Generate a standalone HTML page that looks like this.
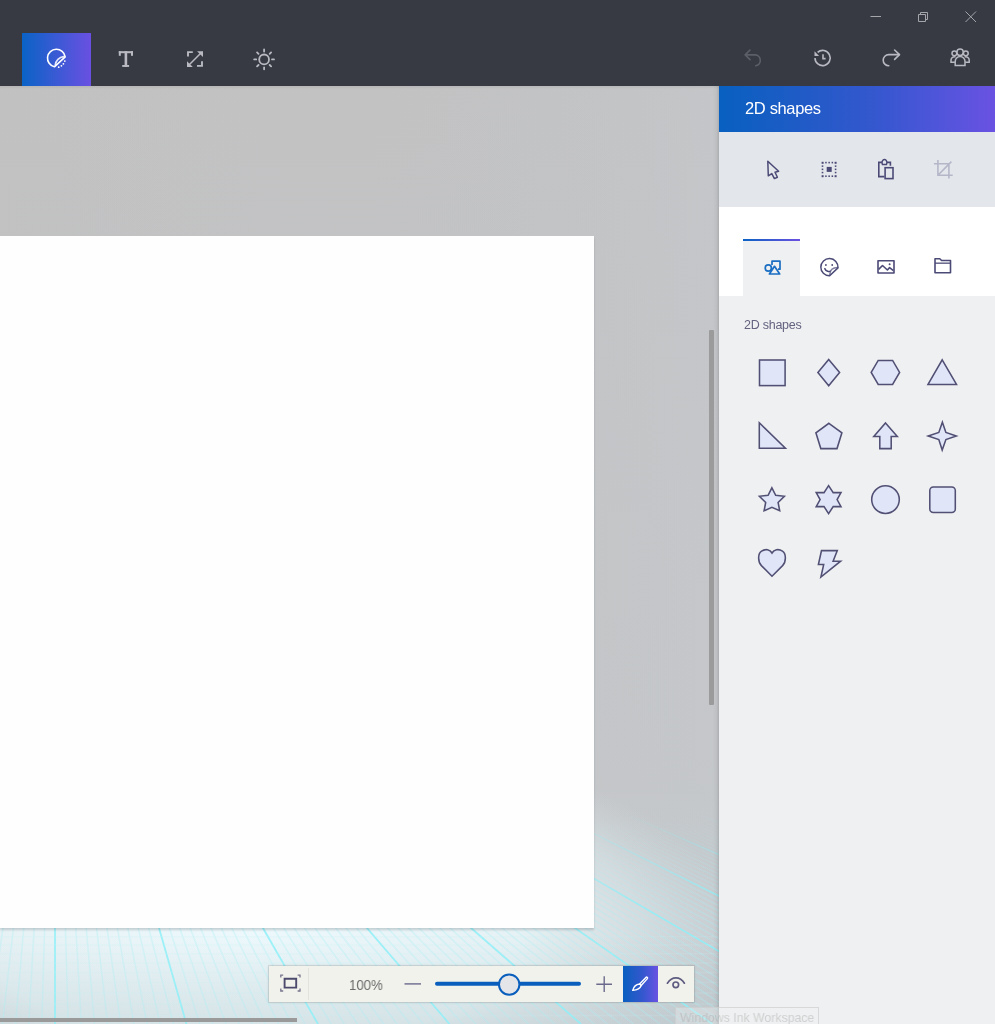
<!DOCTYPE html>
<html><head><meta charset="utf-8">
<style>
*{margin:0;padding:0;box-sizing:border-box}
html,body{width:995px;height:1024px;overflow:hidden;font-family:"Liberation Sans",sans-serif;background:#c3c4c6;-webkit-font-smoothing:antialiased}
.gs{will-change:transform}
.a{position:absolute}
svg{position:absolute;overflow:visible}
.mj{stroke:#8ef0f8;stroke-width:1.8;stroke-opacity:0.85}
.mn{stroke:#a8eef6;stroke-width:1.5;stroke-opacity:0.32}
.hz{stroke:#c4f2f7;stroke-width:1.5;stroke-opacity:0.15}
</style></head><body>
<!-- stage -->
<svg class="a" style="left:0;top:0" width="719" height="1024" viewBox="0 0 719 1024">
  <defs>
    <linearGradient id="bg" x1="0" y1="86" x2="0" y2="1024" gradientUnits="userSpaceOnUse">
      <stop offset="0" stop-color="#c2c2c3"/>
      <stop offset="0.74" stop-color="#c4c6c8"/>
      <stop offset="1" stop-color="#cdd7db"/>
    </linearGradient>
    <radialGradient id="glow" cx="250" cy="935" r="490" gradientUnits="userSpaceOnUse" gradientTransform="translate(250 935) scale(1 0.42) translate(-250 -935)">
      <stop offset="0" stop-color="#ecf8fb" stop-opacity="1"/>
      <stop offset="0.55" stop-color="#e7f3f6" stop-opacity="0.95"/>
      <stop offset="0.8" stop-color="#e0e9ec" stop-opacity="0.55"/>
      <stop offset="1" stop-color="#d8e1e5" stop-opacity="0"/>
    </radialGradient>
    <linearGradient id="fdark" x1="0" y1="935" x2="0" y2="1024" gradientUnits="userSpaceOnUse">
      <stop offset="0" stop-color="#aabbc0" stop-opacity="0"/>
      <stop offset="1" stop-color="#aabbc0" stop-opacity="0.28"/>
    </linearGradient>
    <linearGradient id="bgh" x1="0" y1="0" x2="719" y2="0" gradientUnits="userSpaceOnUse">
      <stop offset="0" stop-color="#c0c0c0" stop-opacity="0.5"/>
      <stop offset="0.5" stop-color="#c2c3c4" stop-opacity="0"/>
      <stop offset="1" stop-color="#c5c8cc" stop-opacity="0.6"/>
    </linearGradient>
    <linearGradient id="tsh" x1="0" y1="86" x2="0" y2="89" gradientUnits="userSpaceOnUse">
      <stop offset="0" stop-color="#000" stop-opacity="0.06"/>
      <stop offset="1" stop-color="#000" stop-opacity="0"/>
    </linearGradient>
    <linearGradient id="fm" x1="0" y1="812" x2="0" y2="910" gradientUnits="userSpaceOnUse">
      <stop offset="0" stop-color="#fff" stop-opacity="0"/>
      <stop offset="1" stop-color="#fff" stop-opacity="1"/>
    </linearGradient>
    <mask id="m1" maskUnits="userSpaceOnUse" x="0" y="0" width="719" height="1024"><rect x="0" y="0" width="719" height="1024" fill="url(#fm)"/></mask>
  </defs>
  <rect x="0" y="86" width="719" height="938" fill="url(#bg)"/>
  <rect x="0" y="86" width="719" height="938" fill="url(#bgh)"/>
  <rect x="0" y="86" width="719" height="3" fill="url(#tsh)"/>
  <rect x="0" y="760" width="719" height="264" fill="url(#glow)"/>
  <rect x="0" y="935" width="719" height="89" fill="url(#fdark)"/>
  <g mask="url(#m1)">
<line x1="-6.5" y1="760" x2="-89.7" y2="1024" class="mn"/>
<line x1="-0.9" y1="760" x2="-76.5" y2="1024" class="mj"/>
<line x1="4.7" y1="760" x2="-63.4" y2="1024" class="mn"/>
<line x1="10.3" y1="760" x2="-50.2" y2="1024" class="mn"/>
<line x1="15.9" y1="760" x2="-37.1" y2="1024" class="mn"/>
<line x1="21.5" y1="760" x2="-23.9" y2="1024" class="mn"/>
<line x1="27.1" y1="760" x2="-10.8" y2="1024" class="mn"/>
<line x1="32.7" y1="760" x2="2.4" y2="1024" class="mn"/>
<line x1="38.2" y1="760" x2="15.5" y2="1024" class="mn"/>
<line x1="43.8" y1="760" x2="28.7" y2="1024" class="mn"/>
<line x1="49.4" y1="760" x2="41.8" y2="1024" class="mn"/>
<line x1="55.0" y1="760" x2="55.0" y2="1024" class="mj"/>
<line x1="60.6" y1="760" x2="68.2" y2="1024" class="mn"/>
<line x1="66.2" y1="760" x2="81.3" y2="1024" class="mn"/>
<line x1="71.8" y1="760" x2="94.5" y2="1024" class="mn"/>
<line x1="77.3" y1="760" x2="107.6" y2="1024" class="mn"/>
<line x1="82.9" y1="760" x2="120.8" y2="1024" class="mn"/>
<line x1="88.5" y1="760" x2="133.9" y2="1024" class="mn"/>
<line x1="94.1" y1="760" x2="147.1" y2="1024" class="mn"/>
<line x1="99.7" y1="760" x2="160.2" y2="1024" class="mn"/>
<line x1="105.3" y1="760" x2="173.4" y2="1024" class="mn"/>
<line x1="110.9" y1="760" x2="186.5" y2="1024" class="mj"/>
<line x1="116.5" y1="760" x2="199.7" y2="1024" class="mn"/>
<line x1="122.0" y1="760" x2="212.8" y2="1024" class="mn"/>
<line x1="127.6" y1="760" x2="226.0" y2="1024" class="mn"/>
<line x1="133.2" y1="760" x2="239.1" y2="1024" class="mn"/>
<line x1="138.8" y1="760" x2="252.3" y2="1024" class="mn"/>
<line x1="144.4" y1="760" x2="265.4" y2="1024" class="mn"/>
<line x1="150.0" y1="760" x2="278.6" y2="1024" class="mn"/>
<line x1="155.6" y1="760" x2="291.7" y2="1024" class="mn"/>
<line x1="161.1" y1="760" x2="304.9" y2="1024" class="mn"/>
<line x1="166.7" y1="760" x2="318.0" y2="1024" class="mj"/>
<line x1="172.3" y1="760" x2="331.2" y2="1024" class="mn"/>
<line x1="177.9" y1="760" x2="344.3" y2="1024" class="mn"/>
<line x1="183.5" y1="760" x2="357.5" y2="1024" class="mn"/>
<line x1="189.1" y1="760" x2="370.6" y2="1024" class="mn"/>
<line x1="194.7" y1="760" x2="383.8" y2="1024" class="mn"/>
<line x1="200.3" y1="760" x2="396.9" y2="1024" class="mn"/>
<line x1="205.8" y1="760" x2="410.1" y2="1024" class="mn"/>
<line x1="211.4" y1="760" x2="423.2" y2="1024" class="mn"/>
<line x1="217.0" y1="760" x2="436.4" y2="1024" class="mn"/>
<line x1="222.6" y1="760" x2="449.5" y2="1024" class="mj"/>
<line x1="228.2" y1="760" x2="462.7" y2="1024" class="mn"/>
<line x1="233.8" y1="760" x2="475.8" y2="1024" class="mn"/>
<line x1="239.4" y1="760" x2="489.0" y2="1024" class="mn"/>
<line x1="244.9" y1="760" x2="502.1" y2="1024" class="mn"/>
<line x1="250.5" y1="760" x2="515.3" y2="1024" class="mn"/>
<line x1="256.1" y1="760" x2="528.4" y2="1024" class="mn"/>
<line x1="261.7" y1="760" x2="541.6" y2="1024" class="mn"/>
<line x1="267.3" y1="760" x2="554.7" y2="1024" class="mn"/>
<line x1="272.9" y1="760" x2="567.9" y2="1024" class="mn"/>
<line x1="278.5" y1="760" x2="581.0" y2="1024" class="mj"/>
<line x1="284.1" y1="760" x2="594.2" y2="1024" class="mn"/>
<line x1="289.6" y1="760" x2="607.3" y2="1024" class="mn"/>
<line x1="295.2" y1="760" x2="620.5" y2="1024" class="mn"/>
<line x1="300.8" y1="760" x2="633.6" y2="1024" class="mn"/>
<line x1="306.4" y1="760" x2="646.8" y2="1024" class="mn"/>
<line x1="312.0" y1="760" x2="659.9" y2="1024" class="mn"/>
<line x1="317.6" y1="760" x2="673.1" y2="1024" class="mn"/>
<line x1="323.2" y1="760" x2="686.2" y2="1024" class="mn"/>
<line x1="328.8" y1="760" x2="699.4" y2="1024" class="mn"/>
<line x1="334.3" y1="760" x2="712.5" y2="1024" class="mj"/>
<line x1="339.9" y1="760" x2="725.7" y2="1024" class="mn"/>
<line x1="345.5" y1="760" x2="738.8" y2="1024" class="mn"/>
<line x1="351.1" y1="760" x2="752.0" y2="1024" class="mn"/>
<line x1="356.7" y1="760" x2="765.1" y2="1024" class="mn"/>
<line x1="362.3" y1="760" x2="778.3" y2="1024" class="mn"/>
<line x1="367.9" y1="760" x2="791.4" y2="1024" class="mn"/>
<line x1="373.4" y1="760" x2="804.6" y2="1024" class="mn"/>
<line x1="379.0" y1="760" x2="817.7" y2="1024" class="mn"/>
<line x1="384.6" y1="760" x2="830.9" y2="1024" class="mn"/>
<line x1="390.2" y1="760" x2="844.0" y2="1024" class="mj"/>
<line x1="395.8" y1="760" x2="857.2" y2="1024" class="mn"/>
<line x1="401.4" y1="760" x2="870.3" y2="1024" class="mn"/>
<line x1="407.0" y1="760" x2="883.5" y2="1024" class="mn"/>
<line x1="412.6" y1="760" x2="896.6" y2="1024" class="mn"/>
<line x1="418.1" y1="760" x2="909.8" y2="1024" class="mn"/>
<line x1="423.7" y1="760" x2="922.9" y2="1024" class="mn"/>
<line x1="429.3" y1="760" x2="936.1" y2="1024" class="mn"/>
<line x1="434.9" y1="760" x2="949.2" y2="1024" class="mn"/>
<line x1="440.5" y1="760" x2="962.4" y2="1024" class="mn"/>
<line x1="446.1" y1="760" x2="975.5" y2="1024" class="mj"/>
<line x1="451.7" y1="760" x2="988.7" y2="1024" class="mn"/>
<line x1="457.2" y1="760" x2="1001.8" y2="1024" class="mn"/>
<line x1="462.8" y1="760" x2="1015.0" y2="1024" class="mn"/>
<line x1="468.4" y1="760" x2="1028.1" y2="1024" class="mn"/>
<line x1="474.0" y1="760" x2="1041.3" y2="1024" class="mn"/>
<line x1="479.6" y1="760" x2="1054.4" y2="1024" class="mn"/>
<line x1="485.2" y1="760" x2="1067.6" y2="1024" class="mn"/>
<line x1="490.8" y1="760" x2="1080.7" y2="1024" class="mn"/>
<line x1="496.4" y1="760" x2="1093.9" y2="1024" class="mn"/>
<line x1="501.9" y1="760" x2="1107.0" y2="1024" class="mj"/>
<line x1="507.5" y1="760" x2="1120.2" y2="1024" class="mn"/>
<line x1="513.1" y1="760" x2="1133.3" y2="1024" class="mn"/>
<line x1="518.7" y1="760" x2="1146.5" y2="1024" class="mn"/>
<line x1="524.3" y1="760" x2="1159.6" y2="1024" class="mn"/>
<line x1="529.9" y1="760" x2="1172.8" y2="1024" class="mn"/>
<line x1="535.5" y1="760" x2="1185.9" y2="1024" class="mn"/>
<line x1="541.0" y1="760" x2="1199.1" y2="1024" class="mn"/>
<line x1="546.6" y1="760" x2="1212.2" y2="1024" class="mn"/>
<line x1="552.2" y1="760" x2="1225.4" y2="1024" class="mn"/>
<line x1="557.8" y1="760" x2="1238.5" y2="1024" class="mj"/>
<line x1="563.4" y1="760" x2="1251.7" y2="1024" class="mn"/>
<line x1="569.0" y1="760" x2="1264.8" y2="1024" class="mn"/>
<line x1="574.6" y1="760" x2="1278.0" y2="1024" class="mn"/>
<line x1="580.2" y1="760" x2="1291.1" y2="1024" class="mn"/>
<line x1="585.7" y1="760" x2="1304.3" y2="1024" class="mn"/>
<line x1="591.3" y1="760" x2="1317.4" y2="1024" class="mn"/>
<line x1="596.9" y1="760" x2="1330.6" y2="1024" class="mn"/>
<line x1="602.5" y1="760" x2="1343.7" y2="1024" class="mn"/>
<line x1="608.1" y1="760" x2="1356.9" y2="1024" class="mn"/>
<line x1="613.7" y1="760" x2="1370.0" y2="1024" class="mj"/>
<line x1="619.3" y1="760" x2="1383.2" y2="1024" class="mn"/>
<line x1="624.8" y1="760" x2="1396.3" y2="1024" class="mn"/>
<line x1="630.4" y1="760" x2="1409.5" y2="1024" class="mn"/>
<line x1="636.0" y1="760" x2="1422.6" y2="1024" class="mn"/>
<line x1="641.6" y1="760" x2="1435.8" y2="1024" class="mn"/>
<line x1="647.2" y1="760" x2="1448.9" y2="1024" class="mn"/>
<line x1="652.8" y1="760" x2="1462.1" y2="1024" class="mn"/>
<line x1="658.4" y1="760" x2="1475.2" y2="1024" class="mn"/>
<line x1="664.0" y1="760" x2="1488.4" y2="1024" class="mn"/>
<line x1="669.5" y1="760" x2="1501.5" y2="1024" class="mj"/>
<line x1="675.1" y1="760" x2="1514.7" y2="1024" class="mn"/>
<line x1="680.7" y1="760" x2="1527.8" y2="1024" class="mn"/>
<line x1="686.3" y1="760" x2="1541.0" y2="1024" class="mn"/>
<line x1="691.9" y1="760" x2="1554.1" y2="1024" class="mn"/>
<line x1="697.5" y1="760" x2="1567.3" y2="1024" class="mn"/>
<line x1="703.1" y1="760" x2="1580.4" y2="1024" class="mn"/>
<line x1="708.6" y1="760" x2="1593.6" y2="1024" class="mn"/>
<line x1="714.2" y1="760" x2="1606.7" y2="1024" class="mn"/>
<line x1="719.8" y1="760" x2="1619.9" y2="1024" class="mn"/>
<line x1="725.4" y1="760" x2="1633.0" y2="1024" class="mj"/>
<line x1="0" y1="936.8" x2="719" y2="936.8" class="hz"/>
<line x1="0" y1="945.1" x2="719" y2="945.1" class="hz"/>
<line x1="0" y1="953.8" x2="719" y2="953.8" class="hz"/>
<line x1="0" y1="962.9" x2="719" y2="962.9" class="hz"/>
<line x1="0" y1="972.4" x2="719" y2="972.4" class="hz"/>
<line x1="0" y1="982.4" x2="719" y2="982.4" class="hz"/>
<line x1="0" y1="992.9" x2="719" y2="992.9" class="hz"/>
<line x1="0" y1="1003.9" x2="719" y2="1003.9" class="hz"/>
<line x1="0" y1="1015.5" x2="719" y2="1015.5" class="hz"/>

  </g>
</svg>
<!-- paper -->
<div class="a" style="left:0;top:236px;width:594px;height:692px;background:#fefefe;box-shadow:0 1.5px 2px rgba(40,55,65,0.2)"></div>
<!-- v scrollbar -->
<div class="a" style="left:709px;top:330px;width:4.8px;height:375px;background:#9b9b9c;border-radius:1px"></div>
<!-- h scrollbar -->
<div class="a" style="left:0;top:1017.5px;width:297px;height:4.5px;background:#9a9a9b"></div>

<!-- top bar -->
<div class="a" style="left:0;top:0;width:995px;height:86px;background:#373943"></div>
<div class="a" style="left:22px;top:33px;width:69px;height:53px;background:linear-gradient(90deg,#0a63c6,#6a50e2)"></div>
<svg class="a" style="left:0;top:0" width="995" height="86" viewBox="0 0 995 86" fill="none">
  <!-- brush -->
  <g transform="translate(0.2 0.6)">
  <g stroke="#fff" stroke-width="1.6" stroke-linecap="round" stroke-linejoin="round">
    <path d="M65,56.2 A8.9,8.9 0 1 0 54.2,66.2 Z"/>
    <path d="M55,64.6 C55.5,60 59,56.5 63.5,56" stroke-opacity="0.85"/>
  </g>
  <g fill="#fff">
    <circle cx="64.6" cy="60.5" r="0.9"/><circle cx="63.2" cy="63.2" r="0.9"/><circle cx="61.2" cy="65.2" r="0.9"/><circle cx="58.5" cy="66.6" r="0.9"/>
  </g>
  </g>
  <!-- T -->
  <g fill="#b9bac1">
    <rect x="118.8" y="51.2" width="14.2" height="2"/>
    <rect x="118.8" y="51.2" width="2" height="4.6"/>
    <rect x="131" y="51.2" width="2" height="4.6"/>
    <rect x="124.6" y="51.2" width="2.6" height="15.7"/>
    <rect x="122.2" y="65" width="6.9" height="1.9"/>
  </g>
  <!-- resize -->
  <g stroke="#b9bac1" stroke-width="1.9" fill="none">
    <path d="M188,56.6 V52.1 H192.8"/>
    <path d="M202,61.3 V65.9 H197"/>
    <path d="M189.2,64.8 L201,53" stroke-width="1.5"/>
  </g>
  <g fill="#b9bac1">
    <path d="M197,51.2 H203 V57 Z"/>
    <path d="M187,61.3 V67 H192.8 Z"/>
  </g>
  <!-- sun -->
  <g stroke="#b9bac1" stroke-width="1.8" fill="none" stroke-linecap="round">
    <circle cx="264.1" cy="59.4" r="4.9"/>
    <path d="M264.1,49.5 V51.5 M264.1,67.3 V69.3 M254.2,59.4 H256.2 M272,59.4 H274 M257.1,52.4 L258.5,53.8 M269.7,65 L271.1,66.4 M271.1,52.4 L269.7,53.8 M258.5,65 L257.1,66.4"/>
  </g>
  <!-- window controls -->
  <g stroke="#a5a6ab" stroke-width="1" fill="none">
    <path d="M870.5,16.5 H881"/>
    <path d="M918.5,14.5 H925.5 V21.5 H918.5 Z M920.5,14.5 V12.5 H927.5 V19.5 H925.5"/>
    <path d="M965.5,11.5 L976,22 M976,11.5 L965.5,22"/>
  </g>
  <!-- undo (disabled) -->
  <g stroke="#5c5f68" stroke-width="1.6" fill="none" stroke-linecap="round" stroke-linejoin="round">
    <path d="M750,50 L745.2,54.9 L750,59.6"/>
    <path d="M745.5,54.9 H754.5 A5.5,5.5 0 0 1 755.8,65.8"/>
  </g>
  <!-- history -->
  <g stroke="#b9bac1" stroke-width="1.6" fill="none">
    <path d="M815,58 A7.6,7.6 0 1 0 817.6,52.3"/>
    <path d="M823,54.2 V58.6 H825.6"/>
  </g>
  <path d="M814.5,51.3 V55.9 H819.1 Z" fill="#b9bac1"/>
  <!-- redo -->
  <g stroke="#b9bac1" stroke-width="1.6" fill="none" stroke-linecap="round" stroke-linejoin="round">
    <path d="M894.6,50 L899.5,54.6 L894.6,59.4"/>
    <path d="M899.2,54.6 H888.8 A5.6,5.6 0 0 0 888.8,65.8"/>
  </g>
  <!-- people -->
  <g stroke="#b9bac1" stroke-width="1.5" fill="none">
    <circle cx="960.1" cy="52.2" r="3.2"/>
    <path d="M955.2,65.4 V61.5 A4.9,4.9 0 0 1 965,61.5 V65.4 Z"/>
    <circle cx="954.4" cy="53.3" r="2.4"/>
    <circle cx="965.8" cy="53.3" r="2.4"/>
    <path d="M954.9,62.3 H951 V60 A3.4,3.4 0 0 1 955.5,57"/>
    <path d="M965.3,62.3 H969.2 V60 A3.4,3.4 0 0 0 964.7,57"/>
  </g>
</svg>

<!-- panel -->
<div class="a" style="left:713px;top:86px;width:6px;height:938px;background:linear-gradient(90deg,rgba(0,0,0,0),rgba(0,0,0,0.04) 60%,rgba(0,0,0,0.13))"></div>
<div class="a" style="left:719px;top:86px;width:276px;height:938px;background:#eff0f2"></div>
<div class="a" style="left:719px;top:86px;width:276px;height:46px;background:linear-gradient(90deg,#0860c0,#1f5bc6 29%,#3657cf 58%,#5055da 80%,#6a52e2)"></div>
<div class="a" style="left:744.5px;top:98px;font-size:16.5px;line-height:20px;color:#fff;letter-spacing:-0.35px;will-change:transform">2D shapes</div>
<div class="a" style="left:719px;top:132px;width:276px;height:75px;background:#e3e6ea"></div>
<div class="a" style="left:719px;top:207px;width:276px;height:89px;background:#ffffff"></div>
<div class="a" style="left:743px;top:241px;width:57px;height:55px;background:#eff0f2"></div>
<div class="a" style="left:743.3px;top:238.7px;width:57px;height:2.5px;background:linear-gradient(90deg,#0b62c5,#6b50e1)"></div>
<div class="a" style="left:743.6px;top:316.5px;font-size:12.5px;line-height:16px;color:#63627f;letter-spacing:-0.25px;will-change:transform">2D shapes</div>

<svg class="a" style="left:0;top:0" width="995" height="1024" viewBox="0 0 995 1024" fill="none">
  <!-- tools -->
  <g stroke="#4b4a77" stroke-width="1.5" stroke-linejoin="round">
    <path d="M767.8,161.2 L778.6,171.2 L775,172.3 L777.4,177.3 L774.4,178.6 L771.8,173.6 L768.3,175.8 Z"/>
  </g>
  <g fill="#4b4a77">
    <rect x="821.6" y="161.8" width="2" height="2"/><rect x="825.2" y="161.8" width="1.5" height="1.6"/><rect x="828.4" y="161.8" width="1.5" height="1.6"/><rect x="831.6" y="161.8" width="1.5" height="1.6"/><rect x="834.6" y="161.8" width="2" height="2"/>
    <rect x="821.6" y="175.2" width="2" height="2"/><rect x="825.2" y="175.4" width="1.5" height="1.6"/><rect x="828.4" y="175.4" width="1.5" height="1.6"/><rect x="831.6" y="175.4" width="1.5" height="1.6"/><rect x="834.6" y="175.2" width="2" height="2"/>
    <rect x="821.7" y="165.4" width="1.6" height="1.5"/><rect x="821.7" y="168.6" width="1.6" height="1.5"/><rect x="821.7" y="171.8" width="1.6" height="1.5"/>
    <rect x="834.8" y="165.4" width="1.6" height="1.5"/><rect x="834.8" y="168.6" width="1.6" height="1.5"/><rect x="834.8" y="171.8" width="1.6" height="1.5"/>
    <rect x="826.7" y="166.9" width="5" height="5"/>
  </g>
  <g stroke="#4b4a77" stroke-width="1.6">
    <path d="M884.4,176.6 H878.8 V162.4 H882 M886.9,162.4 H890.4 V165.8"/>
    <path d="M882,162.4 C882.6,158.5 886.4,158.5 886.9,162.4 L886.5,164.5 H882.4 Z" stroke-width="1.4"/>
    <rect x="885.1" y="167.7" width="7.9" height="10.9"/>
  </g>
  <g stroke="#b5b7c9" stroke-width="1.6">
    <path d="M933.9,163.7 H948.9 V178.4 M937.9,160.1 V175.2 H952.7 M938.9,174.3 L951.4,161.6"/>
  </g>
  <!-- tabs -->
  <g stroke="#1a6ec3" stroke-width="1.7" stroke-linejoin="round">
    <path d="M772,265 V261.2 H780 V269.2 H778"/>
    <circle cx="768.3" cy="268" r="3.1"/>
    <path d="M774.5,266.3 L779.7,274 H769.4 Z"/>
  </g>
  <g stroke="#4b4a77" stroke-width="1.5" stroke-linecap="round">
    <path d="M838,267.8 A8.6,8.6 0 1 0 829.6,275.8 Z"/>
    <path d="M829.8,274.6 C830,270 832.5,267.6 837.6,267.6" stroke-opacity="0.7"/>
    <path d="M824.8,268.6 C826,271.6 829.5,272 830,271.2"/>
  </g>
  <g fill="#4b4a77"><circle cx="825.9" cy="265" r="0.9"/><circle cx="832.2" cy="265" r="0.9"/></g>
  <g stroke="#4b4a77" stroke-width="1.6" stroke-linejoin="round">
    <rect x="878" y="260.8" width="16" height="12.2"/>
    <path d="M878.6,269.4 L882.5,265.5 L887.4,270 L889.6,267.6 L893.4,270.6"/>
  </g>
  <circle cx="889.6" cy="264.2" r="1" fill="#4b4a77"/>
  <g stroke="#4b4a77" stroke-width="1.6" stroke-linejoin="round">
    <path d="M935,272.7 V258.7 H939.8 L941.6,260.5 H950.5 V272.7 Z"/>
    <path d="M935,263.2 H950.5" stroke-opacity="0.8"/>
  </g>
  <!-- shapes -->
  <g stroke="#514f74" stroke-width="1.55" fill="#e0e6f8" stroke-linejoin="miter">
    <rect x="759.5" y="360" width="25.6" height="25.6"/>
    <path d="M828.7,359.5 L839.6,372.6 L828.7,385.7 L817.9,372.6 Z"/>
    <path d="M871.2,372.4 L878.2,360.4 H892.6 L899.6,372.4 L892.6,384.4 H878.2 Z"/>
    <path d="M942.2,359.8 L956.5,384.4 H928 Z"/>
    <path d="M759.3,422.8 L785.4,448.2 H759.3 Z"/>
    <path d="M828.9,423.3 L841.9,432.8 L837,448.6 H820.8 L815.9,432.8 Z"/>
    <path d="M885.5,422.9 L897.3,436.4 H891.2 V448.6 H879.8 V436.4 H873.8 Z"/>
    <path d="M942.4,422.2 L945.9,432.5 L956.3,436.1 L945.9,439.5 L942.2,450 L938.8,439.5 L928.2,435.9 L938.8,432.5 Z"/>
    <path d="M771.9,487.8 L775.7,495.3 L784.4,496.3 L778.1,502.5 L779.7,510.8 L771.9,507.4 L764.1,510.8 L765.7,502.5 L759.4,496.3 L768.1,495.3 Z"/>
    <path d="M828.6,485.6 L833.2,492.6 L841,492.6 L837.1,499.6 L841,506.6 L833.2,506.6 L828.6,513.6 L824,506.6 L816.2,506.6 L820.1,499.6 L816.2,492.6 L824,492.6 Z"/>
    <circle cx="885.5" cy="499.6" r="13.8"/>
    <rect x="929.8" y="487" width="25.5" height="25.5" rx="3.5"/>
    <path d="M772,576.2 L761.4,565.6 C757.6,561.8 757.8,553.5 761.5,551.2 C765.5,548.5 770,549.5 772,553 C774,549.5 778.5,548.5 782.5,551.2 C786.2,553.5 786.4,561.8 782.6,565.6 Z"/>
    <path d="M821.5,550.6 H837.3 L833.1,561.2 H840.6 L820.9,577 L823.7,564.5 H818.4 Z"/>
  </g>
</svg>

<!-- zoom bar -->
<div class="a" style="left:269px;top:966px;width:425px;height:36px;background:#f2f2ed;box-shadow:0 0 0 1px rgba(120,125,130,0.18),0 0 3px rgba(0,0,0,0.14)"></div>
<div class="a" style="left:308px;top:968px;width:1px;height:32px;background:#e2e2de"></div>
<div class="a" style="left:623px;top:966px;width:35px;height:36px;background:linear-gradient(90deg,#0860c0,#1f5bc6 29%,#3657cf 58%,#5055da 80%,#6a52e2)"></div>
<div class="a" style="left:349px;top:977px;font-size:14.7px;line-height:16px;color:#6c6c6c;transform:scaleX(0.9);transform-origin:0 0;will-change:transform">100%</div>
<svg class="a" style="left:0;top:0" width="995" height="1024" viewBox="0 0 995 1024" fill="none">
  <g stroke="#4c4b6e" stroke-width="1.7">
    <path d="M284.6,978.7 H296.2 V987.6 H284.6 Z" stroke-width="1.9"/>
  </g>
  <g stroke="#4c4b6e" stroke-width="1.3" stroke-opacity="0.75">
    <path d="M280.8,977.6 V975.2 H283.2 M297.6,975.2 H300 V977.6 M300,988.6 V991 H297.6 M283.2,991 H280.8 V988.6"/>
  </g>
  <path d="M404.5,983.9 H421" stroke="#6b6a8c" stroke-width="1.4"/>
  <path d="M437,983.8 H579" stroke="#0a5fbd" stroke-width="4" stroke-linecap="round"/>
  <circle cx="509.2" cy="984.6" r="10.2" fill="#e4e5e9" stroke="#0a5fbd" stroke-width="2"/>
  <path d="M596.3,984.2 H612 M604.2,976.3 V992" stroke="#6b6a8c" stroke-width="1.4"/>
  <!-- brush in button -->
  <g stroke="#fff" stroke-width="1.4" stroke-linejoin="round" stroke-linecap="round">
    <path d="M639.6,984 L645.9,977.4 C646.7,976.6 648.1,977.7 647.4,978.6 L641.2,985.5"/>
    <path d="M639.6,984 L641.2,985.5 C640.2,988.4 637.2,990 632.7,990.4 C633.6,987 635.8,984.5 639.6,984 Z"/>
  </g>
  <!-- eye -->
  <g stroke="#5d5c80" stroke-width="1.7" stroke-linecap="round">
    <path d="M667.4,983.2 C672,976.2 680,976.2 684.4,983.2"/>
    <circle cx="675.8" cy="984.8" r="2.8"/>
  </g>
</svg>
<!-- tooltip -->
<div class="a" style="left:675px;top:1007px;width:144px;height:20px;background:rgba(240,240,240,0.35);border:1px solid rgba(200,200,200,0.6)"></div>
<div class="a" style="left:679.5px;top:1010px;font-size:13px;line-height:16px;color:rgba(175,175,175,0.5);transform:scaleX(0.945);transform-origin:0 0;will-change:transform">Windows Ink Workspace</div>
</body></html>
